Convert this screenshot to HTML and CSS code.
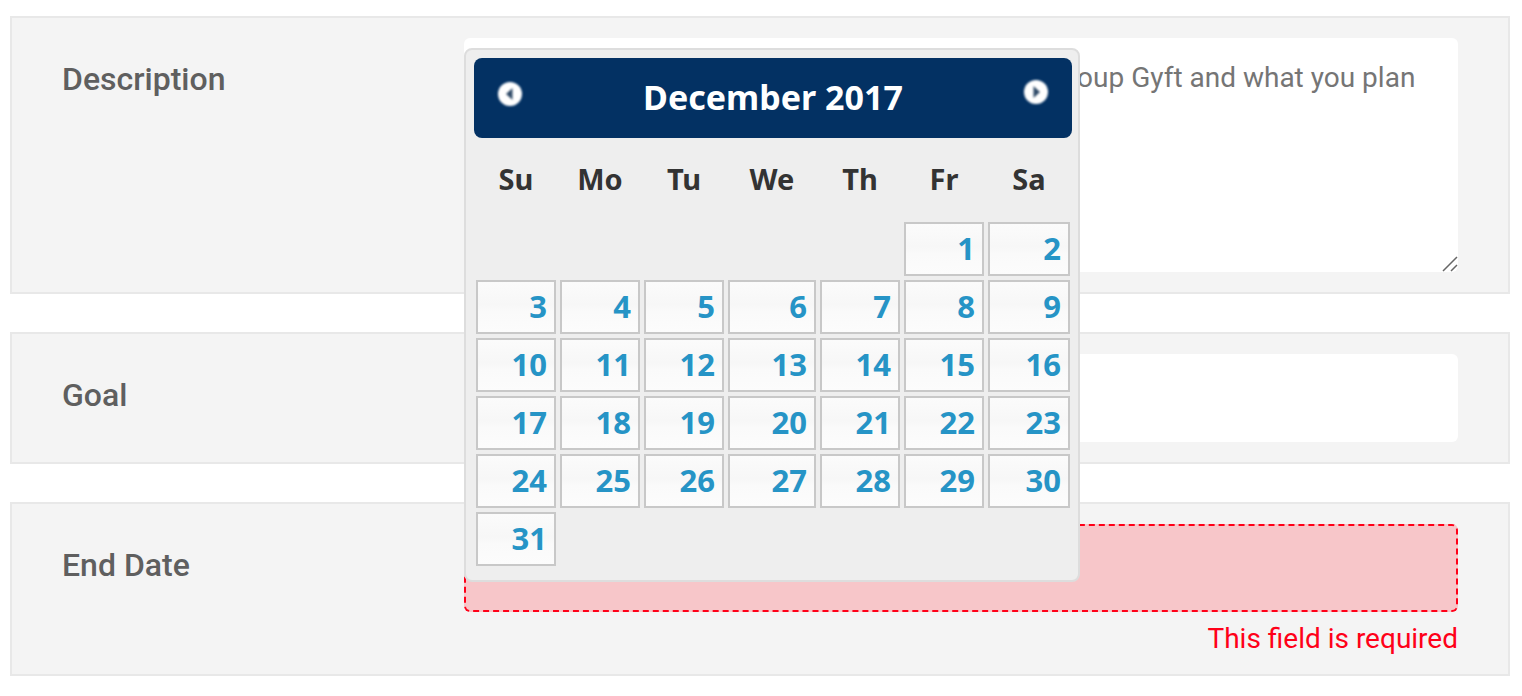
FILE: index.html
```html
<!DOCTYPE html>
<html>
<head>
    <meta http-equiv="Content-Type" content="text/html; charset=utf-8"/>
    <title>Create Gyft</title>
    <link rel="stylesheet" href="styles.css">
</head>
<body>
<form class="gyftForm">
    <div class="formRow">
        <label class="rowLabel" for="description">Description</label>
        <div class="rowField">
            <textarea class="fieldInput descriptionInput" id="description" placeholder="Please tell us about the main purpose of your group Gyft and what you plan"></textarea>
            <svg class="resizeGrip" width="16" height="16" viewBox="0 0 16 16">
                <path d="M1 15 L15 1 M9 15 L15 9" fill="none" stroke="#666" stroke-width="1.5"/>
            </svg>
        </div>
    </div>
    <div class="formRow">
        <label class="rowLabel" for="goal">Goal</label>
        <div class="rowField">
            <input class="fieldInput" id="goal" type="text"/>
        </div>
    </div>
    <div class="formRow">
        <label class="rowLabel" for="endDate">End Date</label>
        <div class="rowField">
            <input class="fieldInput fieldError" id="endDate" type="text"/>
            <div class="errorText">This field is required</div>
        </div>
    </div>
</form>

<div class="datepicker">
    <div class="dpHeader">
        <svg class="dpArrow dpPrev" width="26" height="26" viewBox="0 0 26 26">
            <circle cx="13" cy="13" r="12" fill="#fff"/>
            <path d="M15.5 7 L9 13 L15.5 19 Z" fill="#2f4a68"/>
        </svg>
        <span class="dpTitle">December 2017</span>
        <svg class="dpArrow dpNext" width="26" height="26" viewBox="0 0 26 26">
            <circle cx="13" cy="13" r="12" fill="#fff"/>
            <path d="M10.5 7 L17 13 L10.5 19 Z" fill="#2f4a68"/>
        </svg>
    </div>
    <div class="dpGrid">
        <div class="dpDow">Su</div>
        <div class="dpDow">Mo</div>
        <div class="dpDow">Tu</div>
        <div class="dpDow">We</div>
        <div class="dpDow">Th</div>
        <div class="dpDow">Fr</div>
        <div class="dpDow">Sa</div>

        <div></div><div></div><div></div><div></div><div></div>
        <a class="dpDay">1</a>
        <a class="dpDay">2</a>

        <a class="dpDay">3</a>
        <a class="dpDay">4</a>
        <a class="dpDay">5</a>
        <a class="dpDay">6</a>
        <a class="dpDay">7</a>
        <a class="dpDay">8</a>
        <a class="dpDay">9</a>

        <a class="dpDay">10</a>
        <a class="dpDay">11</a>
        <a class="dpDay">12</a>
        <a class="dpDay">13</a>
        <a class="dpDay">14</a>
        <a class="dpDay">15</a>
        <a class="dpDay">16</a>

        <a class="dpDay">17</a>
        <a class="dpDay">18</a>
        <a class="dpDay">19</a>
        <a class="dpDay">20</a>
        <a class="dpDay">21</a>
        <a class="dpDay">22</a>
        <a class="dpDay">23</a>

        <a class="dpDay">24</a>
        <a class="dpDay">25</a>
        <a class="dpDay">26</a>
        <a class="dpDay">27</a>
        <a class="dpDay">28</a>
        <a class="dpDay">29</a>
        <a class="dpDay">30</a>

        <a class="dpDay">31</a>
    </div>
</div>
</body>
</html>
```

FILE: styles.css
```css
* {
    box-sizing: border-box;
}

html, body {
    margin: 0;
    background: #fff;
}

body {
    height: 696px;
    overflow: hidden;
    font-family: Roboto, sans-serif;
}

.gyftForm {
    padding: 16px 12px 0 10px;
}

.formRow {
    display: flex;
    margin-bottom: 38px;
    padding: 20px 50px 20px 50px;
    background: #f4f4f4;
    border: 2px solid #e8e8e8;
}

.rowLabel {
    width: 402px;
    flex: none;
    padding-top: 21px;
    font-size: 32px;
    line-height: 40px;
    font-weight: 500;
    color: #5f5f5f;
}

.rowField {
    flex: 1;
    position: relative;
}

.fieldInput {
    display: block;
    width: 100%;
    height: 88px;
    padding: 20px;
    background: #fff;
    border: 0;
    border-radius: 6px;
    outline: 0;
    font-family: Roboto, sans-serif;
    font-size: 28px;
    line-height: 40px;
}

.descriptionInput {
    height: 234px;
    resize: none;
}

.descriptionInput::placeholder {
    color: #757575;
    opacity: 1;
}

.resizeGrip {
    position: absolute;
    right: 0;
    bottom: 0;
}

.fieldError {
    background: #f7c6c9;
    border: 2px dashed #ff0018;
}

.errorText {
    height: 42px;
    padding-top: 10px;
    text-align: right;
    font-size: 28px;
    line-height: 34px;
    color: #ff0018;
}

/* date picker popup */
.datepicker {
    position: absolute;
    top: 48px;
    left: 464px;
    width: 616px;
    height: 534px;
    padding: 8px 6px 0 8px;
    background: #eee;
    border: 2px solid #ddd;
    border-radius: 8px;
    font-family: "Noto Sans", sans-serif;
}

.dpHeader {
    display: flex;
    justify-content: space-between;
    height: 80px;
    padding: 23px 23px 0;
    position: relative;
    background: #033163;
    border-radius: 8px;
}

.dpTitle {
    position: absolute;
    left: 0;
    right: 0;
    top: 14px;
    text-align: center;
    font-size: 34px;
    line-height: 50px;
    font-weight: 700;
    color: #fff;
}

.dpArrow {
    filter: blur(0.8px);
}

.dpNext {
    margin-top: -2px;
}

.dpGrid {
    display: grid;
    grid-template-columns: 80px 80px 80px 88px 80px 80px 82px;
    grid-template-rows: 80px repeat(6, 54px);
    gap: 4px;
    margin: 0 2px;
}

.dpDow {
    padding-top: 20px;
    text-align: center;
    font-size: 29px;
    line-height: 42px;
    font-weight: 700;
    color: #333;
}

.dpDay {
    padding-right: 7px;
    text-align: right;
    font-size: 31px;
    line-height: 48px;
    font-weight: 700;
    color: #2694c6;
    background: linear-gradient(#fbfbfb 0%, #f7f7f7 45%, #fafafa 60%, #fcfcfc 100%);
    border: 2px solid #c8c8c8;
}
```
